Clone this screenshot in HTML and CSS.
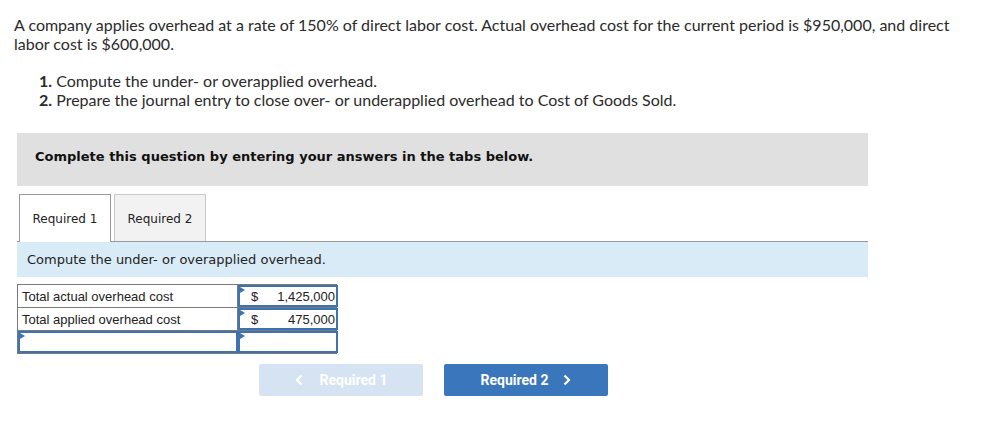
FILE: index.html
```html
<!DOCTYPE html>
<html>
<head>
<meta charset="utf-8">
<link rel="stylesheet" href="styles.css">
</head>
<body>
<div class="page">
  <p class="intro">A company applies overhead at a rate of 150% of direct labor cost. Actual overhead cost for the current period is $950,000, and direct labor cost is $600,000.</p>
  <ol class="steps">
    <li><b>1.</b> Compute the under- or overapplied overhead.</li>
    <li><b>2.</b> Prepare the journal entry to close over- or underapplied overhead to Cost of Goods Sold.</li>
  </ol>
  <div class="frame">
    <div class="instructions">Complete this question by entering your answers in the tabs below.</div>
    <div class="tabs">
      <div class="tab active">Required 1</div>
      <div class="tab">Required 2</div>
    </div>
    <div class="prompt">Compute the under- or overapplied overhead.</div>
    <div class="grid">
      <div class="cell label">Total actual overhead cost</div>
      <div class="cell input money"><span class="mark"></span><span>$</span><span>1,425,000</span></div>
      <div class="cell label">Total applied overhead cost</div>
      <div class="cell input money"><span class="mark"></span><span>$</span><span>475,000</span></div>
      <div class="cell input"><span class="mark"></span></div>
      <div class="cell input"><span class="mark"></span></div>
    </div>
    <div class="nav">
      <div class="btn disabled"><svg class="chev" viewBox="0 0 8 12" width="8" height="12"><path d="M6.5 1.5 L2 6 L6.5 10.5" fill="none" stroke="#fff" stroke-width="2.2"/></svg><span>Required 1</span></div>
      <div class="btn primary"><span>Required 2</span><svg class="chev" viewBox="0 0 8 12" width="8" height="12"><path d="M1.5 1.5 L6 6 L1.5 10.5" fill="none" stroke="#fff" stroke-width="2.2"/></svg></div>
    </div>
  </div>
</div>
</body>
</html>
```
FILE: styles.css
```css
html, body { margin: 0; padding: 0; background: #fff; }
.page { padding: 15px 0 0 14px; font-family: "Lato", "Open Sans", sans-serif; color: #2b2b2b; }
.intro { margin: 0; width: 950px; font-size: 16px; line-height: 19px; }
.steps { list-style: none; margin: 18px 0 0 0; padding: 0 0 0 25px; font-size: 16px; line-height: 19px; }
.steps b { font-weight: 700; }
.frame { margin: 24px 0 0 3px; width: 851px; }
.instructions { background: #e0e0e0; height: 53px; box-sizing: border-box; padding: 16px 0 0 18px; font-family: "DejaVu Sans", Verdana, sans-serif; font-weight: bold; font-size: 13px; color: #111; }
.tabs { display: flex; gap: 3px; margin: 8px 0 0 2px; height: 47px; align-items: flex-end; }
.tab { box-sizing: border-box; width: 92px; height: 47px; border: 1px solid #c8c8c8; border-bottom: none; background: #f2f2f2; display: flex; align-items: center; justify-content: center; font-family: "DejaVu Sans", Verdana, sans-serif; font-size: 12px; color: #222; padding-top: 1px; }
.tab.active { background: #fff; border-color: #999; height: 48px; margin-bottom: -1px; position: relative; z-index: 1; }
.prompt { border-top: 1px solid #999; background: #daebf8; height: 36px; box-sizing: border-box; padding: 10px 0 0 10px; font-family: "DejaVu Sans", Verdana, sans-serif; font-size: 13px; color: #222; }
.grid { margin-top: 7px; display: grid; grid-template-columns: 220px 100px; grid-auto-rows: 22px; width: 320px; border: 1px solid #7a7a7a; box-sizing: border-box; font-family: "Liberation Sans", Arial, sans-serif; font-size: 13px; color: #222; background: #7a7a7a; gap: 1px 0; padding: 0; }
.cell { background: #fff; box-sizing: border-box; position: relative; display: flex; align-items: center; }
.label { padding-left: 4px; border-right: 1px solid #7a7a7a; }
.input { border: 2px solid #3f72b0; }
.money { justify-content: space-between; padding: 0 1px 0 11px; }
.mark { position: absolute; left: 0; top: 0; width: 0; height: 0; border-top: 3px solid transparent; border-bottom: 3px solid transparent; border-left: 5px solid #3f72b0; }
.nav { display: flex; gap: 21px; margin: 10px 0 0 242px; }
.btn { width: 164px; height: 32px; border-radius: 2px; display: flex; align-items: center; justify-content: center; font-family: "Roboto", "Liberation Sans", sans-serif; font-weight: bold; font-size: 14px; color: #fff; gap: 15px; }
.btn.disabled { background: #d6e3f2; gap: 17px; }
.btn.primary { background: #3a76bb; }
.chev { display: block; }
```
